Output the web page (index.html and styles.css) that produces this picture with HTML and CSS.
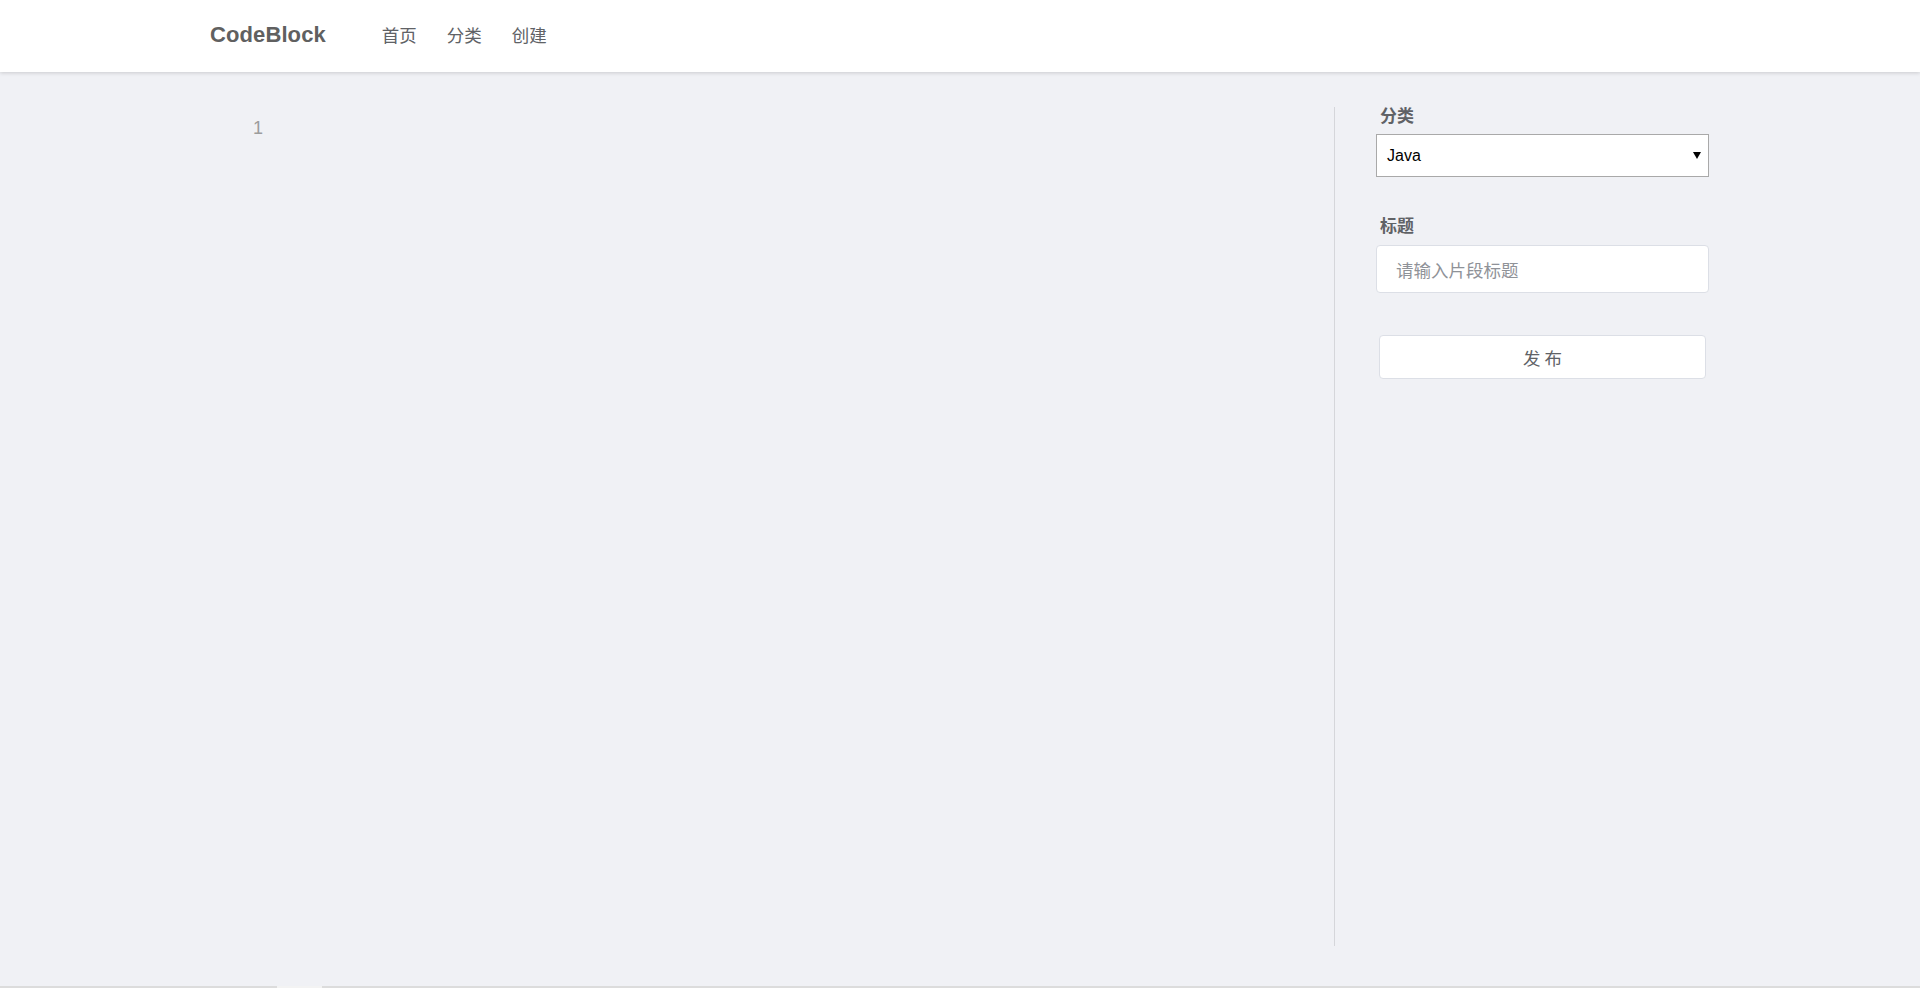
FILE: index.html
```html
<!DOCTYPE html>
<html lang="zh-CN">
<head>
<meta charset="utf-8">
<title>CodeBlock</title>
<link rel="stylesheet" href="styles.css">
</head>
<body>
<div class="page">
  <header class="header">
    <div class="header-inner">
      <div class="logo">CodeBlock</div>
      <nav class="nav">
        <a class="nav-link" href="#">首页</a>
        <a class="nav-link" href="#">分类</a>
        <a class="nav-link" href="#">创建</a>
      </nav>
    </div>
  </header>
  <main class="main">
    <div class="main-inner">
      <section class="editor">
        <div class="code-line"><span class="line-no">1</span><span class="line-text"></span></div>
      </section>
      <aside class="side">
        <div class="field">
          <div class="label">分类</div>
          <div class="select">
            <span class="select-value">Java</span>
            <svg class="select-arrow" width="8" height="7" viewBox="0 0 8 7"><path d="M0 0H8L4 7Z" fill="#000"/></svg>
          </div>
        </div>
        <div class="field field-title">
          <div class="label">标题</div>
          <div class="input"><span class="placeholder">请输入片段标题</span></div>
        </div>
        <button class="btn" type="button">发 布</button>
      </aside>
    </div>
  </main>
  <div class="scrollbar">
    <div class="scroll-track scroll-left"></div>
    <div class="scroll-thumb"></div>
    <div class="scroll-track scroll-right"></div>
  </div>
</div>
</body>
</html>
```

FILE: styles.css
```css
* { box-sizing: border-box; }
html, body { margin: 0; padding: 0; }
body {
  background: #f0f1f5;
  font-family: "Liberation Sans", "Noto Sans CJK SC", sans-serif;
  color: #606266;
}
.page {
  display: flex;
  flex-direction: column;
  min-height: 100vh;
}
.header {
  height: 72px;
  background: #fff;
  box-shadow: 0 1px 4px rgba(0, 0, 0, 0.16);
  flex: none;
}
.header-inner {
  width: 1500px;
  margin: 0 auto;
  height: 72px;
  display: flex;
  align-items: center;
}
.logo {
  font-size: 22px;
  font-weight: bold;
  color: #606060;
  margin-right: 56px;
  margin-top: -3px;
  letter-spacing: 0.1px;
}
.nav {
  display: flex;
  gap: 30px;
  margin-top: -2px;
}
.nav-link {
  font-family: "Noto Sans CJK SC", "Liberation Sans", sans-serif;
  font-size: 17.5px;
  color: #606266;
  text-decoration: none;
  line-height: 24px;
}
.main {
  flex: 1;
  display: flex;
}
.main-inner {
  width: 1500px;
  margin: 0 auto;
  display: flex;
  padding: 35px 0 40px;
}
.editor {
  width: 1124px;
  padding: 7px 0 0 43px;
}
.code-line {
  display: flex;
  height: 28px;
  align-items: center;
}
.line-no {
  font-family: "Liberation Sans", "Arial", sans-serif;
  font-size: 18px;
  color: #9c9c9c;
  width: 20px;
}
.side {
  width: 376px;
  border-left: 1px solid #d5d6da;
  padding: 0 1px 0 41px;
}
.label {
  font-family: "Noto Sans CJK SC", "Liberation Sans", sans-serif;
  font-size: 17px;
  font-weight: bold;
  line-height: 17px;
  color: #606266;
  padding-left: 4px;
  margin-top: -1px;
  margin-bottom: 11px;
}
.select {
  height: 43px;
  background: #fff;
  border: 1px solid #a9a9a9;
  display: flex;
  align-items: center;
  justify-content: space-between;
  padding: 0 7px 0 10px;
}
.select-value {
  font-size: 16px;
  color: #000;
}
.select-arrow { display: block; }
.field-title { margin-top: 40px; }
.field-title .label { margin-bottom: 12px; }
.input {
  height: 48px;
  background: #fff;
  border: 1px solid #dcdfe6;
  border-radius: 4px;
  display: flex;
  align-items: center;
  padding-left: 19px;
}
.placeholder {
  font-family: "Noto Sans CJK SC", "Liberation Sans", sans-serif;
  font-size: 17.5px;
  color: #8f9298;
}
.btn {
  display: block;
  width: 327px;
  height: 44px;
  margin: 42px 0 0 3px;
  background: #fff;
  border: 1px solid #dcdfe6;
  border-radius: 4px;
  font-family: "Noto Sans CJK SC", "Liberation Sans", sans-serif;
  font-size: 17.5px;
  color: #606266;
  padding: 0;
}
.scrollbar {
  height: 2px;
  display: flex;
  flex: none;
}
.scroll-track { background: #dcdcdc; }
.scroll-left { width: 277px; }
.scroll-thumb { width: 45px; background: #f3f3f3; }
.scroll-right { flex: 1; }
```
